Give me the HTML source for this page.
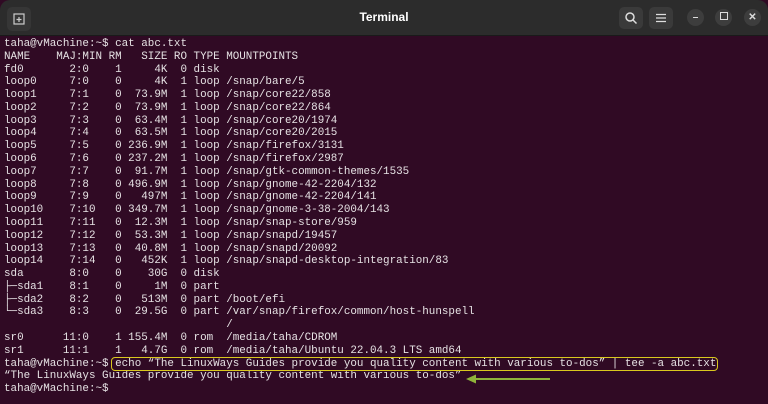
<!DOCTYPE html>
<html><head><style>
html,body{margin:0;padding:0;width:768px;height:404px;overflow:hidden;background:#300a24}
.tb{position:absolute;left:0;top:0;width:768px;height:35px;background:#2c2c2c;border-radius:10px 10px 0 0;border-bottom:1px solid #1a1a1a}
.title{position:absolute;left:0;width:768px;top:10px;text-align:center;color:#fff;font:bold 12px "Liberation Sans",sans-serif}
.btn{position:absolute;background:#3a3a3a;border-radius:5px}
.c{position:absolute;width:17px;height:17px;border-radius:50%;background:#3d3d3d;color:#ddd;font:bold 10px "Liberation Sans",sans-serif;text-align:center;line-height:17px}
pre{position:absolute;left:4px;top:38px;margin:0;font:10.9px/12.78px "Liberation Mono",monospace;color:#e6e2e4}
.box{position:absolute;left:111px;top:357px;width:605px;height:12px;border:1.2px solid #d9c81e;border-radius:4px}
</style></head><body>
<div class="tb">
 <div class="btn" style="left:7px;top:7px;width:24px;height:24px;background:#363636"></div>
 <svg style="position:absolute;left:13px;top:13px" width="12" height="12"><rect x="1" y="1" width="10" height="10" fill="none" stroke="#ccc" stroke-width="1.2"/><path d="M6 4v5M3.5 6.5h5" stroke="#ccc" stroke-width="1.2"/></svg>
 <div class="title">Terminal</div>
 <div class="btn" style="left:619px;top:7px;width:24px;height:22px"></div>
 <svg style="position:absolute;left:624px;top:11px" width="14" height="14"><circle cx="6" cy="6" r="4" fill="none" stroke="#ddd" stroke-width="1.5"/><path d="M9 9l3.5 3.5" stroke="#ddd" stroke-width="1.5"/></svg>
 <div class="btn" style="left:649px;top:7px;width:24px;height:22px"></div>
 <svg style="position:absolute;left:655px;top:13px" width="12" height="10"><path d="M1 1.5h10M1 5h10M1 8.5h10" stroke="#ddd" stroke-width="1.3"/></svg>
 <div class="c" style="left:687px;top:9px">–</div>
 <div class="c" style="left:715px;top:9px"><span style="display:inline-block;width:6px;height:6px;border:1.3px solid #ddd;vertical-align:middle;margin-top:-2px"></span></div>
 <div class="c" style="left:744px;top:9px">✕</div>
</div>
<pre>taha@vMachine:~$ cat abc.txt
NAME    MAJ:MIN RM   SIZE RO TYPE MOUNTPOINTS
fd0       2:0    1     4K  0 disk
loop0     7:0    0     4K  1 loop /snap/bare/5
loop1     7:1    0  73.9M  1 loop /snap/core22/858
loop2     7:2    0  73.9M  1 loop /snap/core22/864
loop3     7:3    0  63.4M  1 loop /snap/core20/1974
loop4     7:4    0  63.5M  1 loop /snap/core20/2015
loop5     7:5    0 236.9M  1 loop /snap/firefox/3131
loop6     7:6    0 237.2M  1 loop /snap/firefox/2987
loop7     7:7    0  91.7M  1 loop /snap/gtk-common-themes/1535
loop8     7:8    0 496.9M  1 loop /snap/gnome-42-2204/132
loop9     7:9    0   497M  1 loop /snap/gnome-42-2204/141
loop10    7:10   0 349.7M  1 loop /snap/gnome-3-38-2004/143
loop11    7:11   0  12.3M  1 loop /snap/snap-store/959
loop12    7:12   0  53.3M  1 loop /snap/snapd/19457
loop13    7:13   0  40.8M  1 loop /snap/snapd/20092
loop14    7:14   0   452K  1 loop /snap/snapd-desktop-integration/83
sda       8:0    0    30G  0 disk
├─sda1    8:1    0     1M  0 part
├─sda2    8:2    0   513M  0 part /boot/efi
└─sda3    8:3    0  29.5G  0 part /var/snap/firefox/common/host-hunspell
                                  /
sr0      11:0    1 155.4M  0 rom  /media/taha/CDROM
sr1      11:1    1   4.7G  0 rom  /media/taha/Ubuntu 22.04.3 LTS amd64
taha@vMachine:~$ echo “The LinuxWays Guides provide you quality content with various to-dos” | tee -a abc.txt
“The LinuxWays Guides provide you quality content with various to-dos”
taha@vMachine:~$</pre>
<div class="box"></div>
<svg style="position:absolute;left:462px;top:372px" width="90" height="14"><path d="M88 7H12" stroke="#8fb33a" stroke-width="2"/><path d="M4 7l10-4.5v9z" fill="#8fb33a"/></svg>
</body></html>
